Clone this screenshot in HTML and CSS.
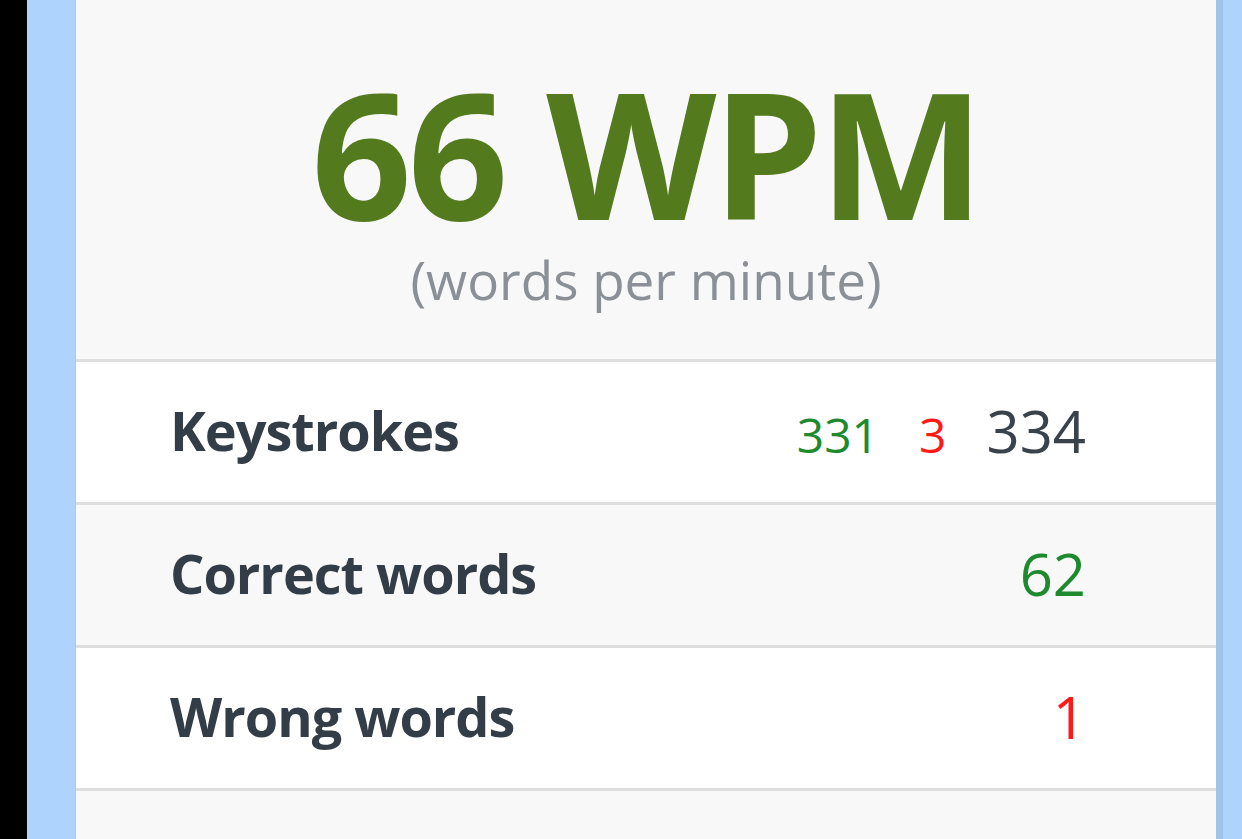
FILE: index.html
```html
<!DOCTYPE html>
<html lang="en">
<head>
    <meta charset="UTF-8">
    <meta name="viewport" content="width=device-width, initial-scale=1.0">
    <title>Typing Test Result</title>
    <link rel="stylesheet" href="styles.css">
</head>
<body>
    <div class="rail"></div>
    <div class="backdrop">
        <!-- Result box -->
        <div class="result-box">
            <div class="result-head">
                <div class="wpm">66 WPM</div>
                <div class="wpm-note">(words per minute)</div>
            </div>
            <div class="result-row">
                <span class="row-label">Keystrokes</span>
                <span class="row-value">
                    <span class="small-num good">331</span>
                    <span class="small-num bad">3</span>
                    <span class="total">334</span>
                </span>
            </div>
            <div class="result-row alt">
                <span class="row-label">Correct words</span>
                <span class="row-value good">62</span>
            </div>
            <div class="result-row">
                <span class="row-label">Wrong words</span>
                <span class="row-value bad">1</span>
            </div>
            <div class="result-row alt"></div>
        </div>
    </div>
</body>
</html>
```

FILE: styles.css
```css
body {
    margin: 0;
    padding: 0;
    height: 100vh;
    display: flex;
    overflow: hidden;
    font-family: "Open Sans", "Noto Sans", sans-serif;
}

.rail {
    width: 27px;
    background: #000;
}

.backdrop {
    flex: 1;
    background: #aed4fd;
    padding-left: 48px;
    display: flex;
}

.result-box {
    width: 1140px;
    border-left: 1px solid #a5cbf3;
    border-right: 7px solid #9fc4ec;
    background: #f8f8f8;
    display: flex;
    flex-direction: column;
}

.result-head {
    height: 362px;
    flex-shrink: 0;
    padding-top: 58px;
    text-align: center;
    border-bottom: 3px solid #dedede;
    box-sizing: border-box;
}

.wpm {
    font-size: 176px;
    font-weight: 700;
    line-height: 188px;
    color: #547a1e;
    letter-spacing: -4px;
}

.wpm-note {
    font-size: 53px;
    line-height: 67px;
    color: #8a9096;
}

.result-row {
    height: 143px;
    flex-shrink: 0;
    box-sizing: border-box;
    border-bottom: 3px solid #dedede;
    background: #fff;
    display: flex;
    align-items: center;
    justify-content: space-between;
    padding: 0 130px 4px 94px;
}

.result-row.alt {
    background: #f8f8f8;
}

.row-label {
    font-size: 54px;
    font-weight: 700;
    color: #333d47;
    letter-spacing: -1px;
}

.row-value {
    font-size: 58px;
    display: flex;
    align-items: baseline;
    gap: 40px;
}

.small-num {
    font-size: 48px;
}

.total {
    color: #3a434b;
}

.good {
    color: #1e8a2e;
}

.bad {
    color: #ff1a1a;
}
```
